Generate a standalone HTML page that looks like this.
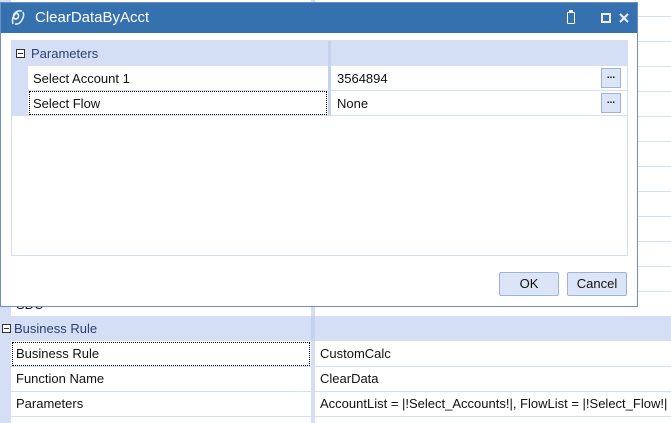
<!DOCTYPE html>
<html><head><style>
*{margin:0;padding:0;box-sizing:border-box}
body{width:671px;height:423px;overflow:hidden;background:#fff;position:relative;font-family:"Segoe UI","Liberation Sans",sans-serif;font-size:13px;color:#111}
.a{position:absolute}
.hl{position:absolute;height:1px;background:#d4dff5}
.t{position:absolute;line-height:25px;white-space:nowrap}
.btn{position:absolute;background:#dce5f7;border:1px solid #9fb3d9;border-radius:2px;text-align:center;line-height:21px}
.dots{position:absolute;width:20px;height:20px;background:#dce5f7;border:1px solid #9fb3d9;font-size:10px;text-align:center;line-height:14px;font-weight:bold}
</style></head><body>
<div class="a" style="left:0;top:0;width:11px;height:423px;background:#d4dff5"></div>
<div class="a" style="left:311px;top:0;width:4px;height:423px;background:#d4dff5"></div>
<div class="hl" style="left:0;top:16px;width:671px"></div>
<div class="hl" style="left:0;top:41px;width:671px"></div>
<div class="hl" style="left:0;top:66px;width:671px"></div>
<div class="hl" style="left:0;top:91px;width:671px"></div>
<div class="hl" style="left:0;top:116px;width:671px"></div>
<div class="hl" style="left:0;top:141px;width:671px"></div>
<div class="hl" style="left:0;top:166px;width:671px"></div>
<div class="hl" style="left:0;top:191px;width:671px"></div>
<div class="hl" style="left:0;top:216px;width:671px"></div>
<div class="hl" style="left:0;top:241px;width:671px"></div>
<div class="hl" style="left:0;top:266px;width:671px"></div>
<div class="hl" style="left:0;top:291px;width:671px"></div>
<div class="t" style="left:16px;top:292px;font-size:13px">SDC</div>
<div class="a" style="left:0;top:316px;width:671px;height:25px;background:#d4dff5"></div>
<div class="a" style="left:311px;top:316px;width:4px;height:25px;background:#c4d2ee"></div>
<div class="a" style="left:2px;top:324px;width:9px;height:9px;border:1px solid #333;background:#fff"></div>
<div class="a" style="left:4px;top:328px;width:5px;height:1px;background:#333"></div>
<div class="t" style="left:14px;top:316px;color:#2e3f6e">Business Rule</div>
<div class="hl" style="left:0;top:366px;width:671px"></div>
<div class="hl" style="left:0;top:391px;width:671px"></div>
<div class="hl" style="left:0;top:416px;width:671px"></div>
<div class="a" style="left:12px;top:342px;width:298px;height:24px;border:1px dotted #000"></div>
<div class="t" style="left:16px;top:341px">Business Rule</div>
<div class="t" style="left:16px;top:366px">Function Name</div>
<div class="t" style="left:16px;top:391px">Parameters</div>
<div class="t" style="left:320px;top:341px">CustomCalc</div>
<div class="t" style="left:320px;top:366px">ClearData</div>
<div class="t" style="left:320px;top:391px">AccountList = |!Select_Accounts!|, FlowList = |!Select_Flow!|</div>

<div class="a" style="left:0;top:2px;width:638px;height:305px;background:#fff;border:1px solid #6f8fc4"></div>
<div class="a" style="left:1px;top:3px;width:636px;height:30px;background:#3571ae"></div>
<svg class="a" style="left:8px;top:8px" width="20" height="20" viewBox="0 0 20 20"><path d="M14 3 C8 2 4 7 6 10 C8 13 12 9 10 6 C8 3 3 10 5 16 M15 4 C17 8 13 17 7 16" stroke="#e8eef8" stroke-width="1.6" fill="none"/></svg>
<div class="t" style="left:35px;top:5px;color:#fff;font-size:15px">ClearDataByAcct</div>
<div class="a" style="left:567px;top:12px;width:8px;height:12px;border:1.5px solid #fff;border-radius:1px"></div>
<div class="a" style="left:569px;top:10px;width:4px;height:2px;background:#fff"></div>
<div class="a" style="left:601px;top:13px;width:10px;height:10px;border:2px solid #eef"></div>
<svg class="a" style="left:619px;top:13px" width="10" height="10" viewBox="0 0 10 10"><path d="M1 1L9 9M9 1L1 9" stroke="#eef" stroke-width="2"/></svg>

<div class="a" style="left:11px;top:40px;width:617px;height:216px;border:1px solid #d4dff5"></div>
<div class="a" style="left:12px;top:41px;width:615px;height:25px;background:#d4dff5"></div>
<div class="a" style="left:328px;top:41px;width:3px;height:75px;background:#c4d2ee"></div>
<div class="a" style="left:12px;top:66px;width:16px;height:50px;background:#d4dff5"></div>
<div class="a" style="left:16px;top:49px;width:9px;height:9px;border:1px solid #333;background:#fff"></div>
<div class="a" style="left:18px;top:53px;width:5px;height:1px;background:#333"></div>
<div class="t" style="left:31px;top:41px;color:#2e3f6e">Parameters</div>
<div class="hl" style="left:28px;top:90px;width:599px"></div>
<div class="hl" style="left:12px;top:115px;width:615px"></div>
<div class="a" style="left:29px;top:91px;width:298px;height:24px;border:1px dotted #000"></div>
<div class="t" style="left:33px;top:66px">Select Account 1</div>
<div class="t" style="left:33px;top:91px">Select Flow</div>
<div class="t" style="left:337px;top:66px">3564894</div>
<div class="t" style="left:337px;top:91px">None</div>
<div class="dots" style="left:601px;top:68px">...</div>
<div class="dots" style="left:601px;top:93px">...</div>

<div class="btn" style="left:499px;top:272px;width:60px;height:24px">OK</div>
<div class="btn" style="left:567px;top:272px;width:60px;height:24px">Cancel</div>
</body></html>
